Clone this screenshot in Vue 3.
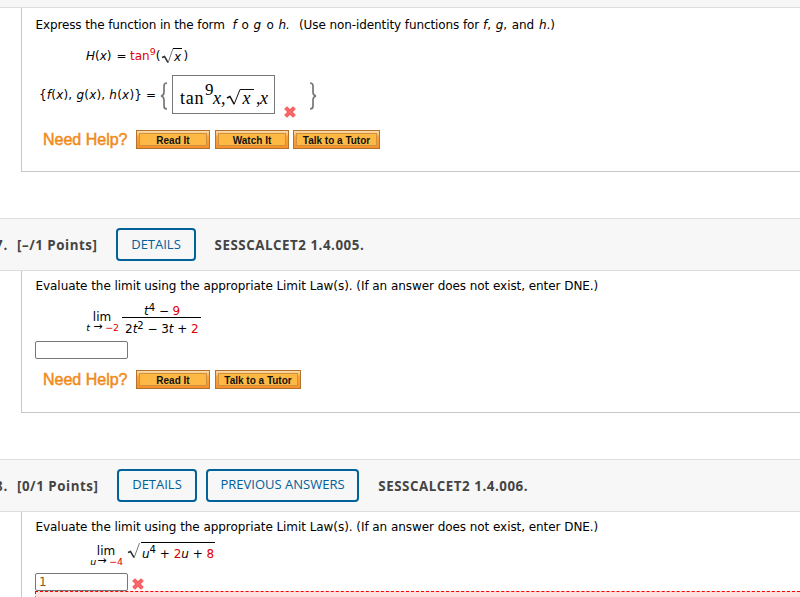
<script setup>
import { h } from 'vue'

const prompt = 'Evaluate the limit using the appropriate Limit Law(s). (If an answer does not exist, enter DNE.)'

const WrongMark = () =>
  h('svg', { class: 'wrong', viewBox: '0 0 14 14', width: 14, height: 14 }, [
    h('path', { d: 'M2.6 2.6L11.4 11.4M11.4 2.6L2.6 11.4', stroke: '#f7575a', 'stroke-width': 4 }),
    h('path', { d: 'M2.6 2.6L11.4 11.4M11.4 2.6L2.6 11.4', stroke: '#fb6b6b', 'stroke-width': 2 }),
  ])

const NeedHelp = ({ links }) =>
  h('div', { class: 'help' }, [
    h('span', { class: 'help-label' }, 'Need Help?'),
    ...links.map((l) => h('button', { class: ['help-btn', { wide: l.length > 10 }] }, h('span', l))),
  ])
NeedHelp.props = ['links']
</script>

<template>
  <main class="page">
    <div class="bar-end"></div>
    <section class="card first">
      <p class="line express">
        <span class="w-form">Express the function in the form</span>
        <i class="w-f">f</i><span class="w-o">o</span><i class="w-g">g</i><span class="w-o">o</span><i class="w-h">h.</i>
        <span class="w-use">(Use non-identity functions for</span>
        <span class="w-list"><i>f</i>, <i>g</i>, and <i>h</i>.)</span>
      </p>
      <div class="formula hx">
        <span class="w-hx"><i>H</i>(<i>x</i>)</span><span class="w-eq">=</span>
        <span class="red">tan</span><sup class="red">9</sup><span class="w-paren">(</span>
        <span class="root small-root">
          <svg viewBox="0 0 22 18" width="22" height="18">
            <path d="M1 10.5L3.5 9.5L7 15.5" fill="none" stroke="#333" stroke-width="1.5" />
            <path d="M7 16L12 1.5" fill="none" stroke="#777" stroke-width="1" />
            <path d="M12 1.5H21" fill="none" stroke="#000" stroke-width="1" />
          </svg>
          <i>x</i>
        </span><span>)</span>
      </div>
      <div class="formula answer">
        <span class="w-set">{<i>f</i>(<i>x</i>), <i>g</i>(<i>x</i>), <i>h</i>(<i>x</i>)}</span><span class="w-eq2">=</span>
        <svg class="brace" viewBox="0 0 8 28" width="8" height="28">
          <path d="M7 1Q4 1 4 4V10Q4 13.5 1 14Q4 14.5 4 18V24Q4 27 7 27" />
        </svg>
        <div class="mathbox">
          <span class="m-tan">tan</span><span class="m-sup">9</span><i class="m-x">x</i><span class="m-c">,</span>
          <span class="root big-root">
            <svg viewBox="0 0 28 20" width="28" height="20">
              <path d="M1 11L4 9.5L8 17" fill="none" stroke="#111" stroke-width="1.5" />
              <path d="M8 17.5L14 2.5H28" fill="none" stroke="#111" stroke-width="1" />
            </svg>
            <i>x</i>
          </span>
          <span class="m-c2">,</span><i class="m-x">x</i>
        </div>
        <WrongMark class="low" />
        <svg class="brace close" viewBox="0 0 8 28" width="8" height="28">
          <path d="M1 1Q4 1 4 4V10Q4 13.5 7 14Q4 14.5 4 18V24Q4 27 1 27" />
        </svg>
      </div>
      <NeedHelp :links="['Read It', 'Watch It', 'Talk to a Tutor']" />
    </section>

    <header class="qhead seven">
      <span class="num">7.</span><span class="points">[–/1 Points]</span>
      <button class="btn">DETAILS</button>
      <span class="code">SESSCALCET2 1.4.005.</span>
    </header>
    <section class="card second">
      <p class="line">{{ prompt }}</p>
      <div class="formula limit">
        <div class="lim">
          <span class="word">lim</span>
          <span class="under"><i>t</i><b class="arrow">→</b><em>−2</em></span>
        </div>
        <div class="frac">
          <div class="top"><i>t</i><sup>4</sup><span class="op">−</span><span class="red">9</span></div>
          <div class="bottom"><span>2<i>t</i></span><sup>2</sup><span class="op">−</span><span>3<i>t</i></span><span class="op">+</span><span class="red">2</span></div>
        </div>
      </div>
      <input class="field" />
      <NeedHelp :links="['Read It', 'Talk to a Tutor']" />
    </section>

    <header class="qhead eight">
      <span class="num">8.</span><span class="points">[0/1 Points]</span>
      <button class="btn">DETAILS</button>
      <button class="btn prev">PREVIOUS ANSWERS</button>
      <span class="code">SESSCALCET2 1.4.006.</span>
    </header>
    <section class="card third">
      <p class="line">{{ prompt }}</p>
      <div class="formula rootlimit">
        <div class="lim">
          <span class="word">lim</span>
          <span class="under"><i>u</i><b class="arrow">→</b><em>−4</em></span>
        </div>
        <svg class="radical" viewBox="0 0 14 18" width="14" height="18">
          <path d="M1 10.5L3.5 9.5L7 15.5" fill="none" stroke="#333" stroke-width="1.5" />
          <path d="M7 16L12.5 1" fill="none" stroke="#777" stroke-width="1" />
        </svg>
        <div class="radicand"><i>u</i><sup>4</sup><span class="op">+</span><span><span class="red">2</span><i>u</i></span><span class="op">+</span><span class="red">8</span></div>
      </div>
      <div class="given"><input class="field" value="1" /><WrongMark /></div>
      <div class="feedback"></div>
    </section>
  </main>
</template>

<style>
body { margin: 0; background: #fff; overflow: hidden; }
</style>

<style scoped>
.page { width: 800px; height: 597px; overflow: hidden; font: 12px/20px "DejaVu Sans", Verdana, sans-serif; color: #000; }
.page :deep(*) { box-sizing: border-box; }
.bar-end { height: 8px; background: #f7f7f7; border-bottom: 1px solid #ddd; box-sizing: border-box; }
.card { margin-left: 21px; border-left: 1px solid #c8c8c8; border-bottom: 1px solid #c8c8c8; padding-left: 13px; }
.first { height: 164px; margin-bottom: 46px; }
.second { height: 142px; margin-bottom: 46px; }
.third { height: 140px; border-bottom: 0; }
.line { margin: 0; padding: 5px 0 0 0.5px; height: 25px; letter-spacing: -0.06px; white-space: pre; }
.first .line { padding-top: 7px; height: 37px; display: flex; }
.w-form { width: 197px; letter-spacing: -0.125px; }
.w-f { width: 9px; } .w-o { width: 12px; } .w-g { width: 13px; } .w-h { width: 20.5px; }
.w-use { width: 184px; letter-spacing: -0.09px; }
.w-list { word-spacing: 1px; }
.formula { display: flex; }
.formula > * { flex: none; }
.red { color: #d00; }
sup { font-size: 10px; line-height: 12px; vertical-align: baseline; }
.hx { margin-left: 51px; height: 22px; line-height: 22px; }
.w-hx { width: 30.5px; } .w-eq { width: 13.5px; } .hx sup { margin-top: 1px; font-size: 9.5px; }
.w-paren { margin-right: 1px; }
.root { position: relative; display: block; }
.root svg { display: block; }
.small-root { width: 22px; margin-top: 2px; }
.small-root i { position: absolute; left: 12.5px; top: -1px; }
.answer { height: 55px; margin-left: 4px; padding-top: 17px; }
.w-set { width: 107px; line-height: 20px; letter-spacing: 0.2px; margin-top: 1px; }
.w-eq2 { width: 14px; margin-top: 1px; }
.brace { margin-top: -2px; fill: none; stroke: #777; stroke-width: 1.7; }
.brace path { fill: none; }
.mathbox { width: 103px; height: 39px; margin: -9px 0 0 4px; border: 1px solid #777; display: flex; padding: 12px 0 0 7px; font: 18px/20px "Liberation Serif", serif; }
.m-tan { width: 25px; letter-spacing: 0.8px; }
.m-sup { font-size: 17px; width: 8px; margin-top: -8px; }
.m-x { width: 8px; } .m-c { width: 5px; }
.big-root { width: 30px; margin-top: -1px; }
.big-root i { position: absolute; left: 16.5px; top: 1px; }
.m-c2 { width: 4px; }
:deep(.wrong) { display: block; fill: none; }
.low { margin: 21px 0 0 8px; }
.close { margin-left: 12px; }
:deep(.help) { display: flex; align-items: center; height: 21px; margin-left: 8px; }
:deep(.help-label) { width: 93px; font: 16px/20px "Liberation Sans", Arial, sans-serif; -webkit-text-stroke: 0.5px #f08a1a; color: #f08a1a; }
:deep(.help-btn) { width: 74px; height: 19px; margin: 0 5px 0 0; padding: 2px; border: 1px solid #b3712e; background: linear-gradient(#fbdcae, #f9a63c 35%, #f7902a); }
:deep(.help-btn.wide) { width: 87px; margin-left: -1px; }
.second :deep(.help-btn.wide) { width: 86px; margin-left: 0; }
:deep(.help-btn span) { display: block; height: 13px; border: 1px solid #d0913f; background: #fdb943; font: bold 10px/13px "Liberation Sans", Arial, sans-serif; color: #111; text-align: center; white-space: nowrap; }
.first :deep(.help) { margin-top: 7px; }
.qhead { box-sizing: border-box; height: 53px; background: #f7f7f7; border: solid #ddd; border-width: 1px 0; display: flex; align-items: center; font: bold 13.33px/20px "Open Sans", sans-serif; letter-spacing: 0.54px; color: #444; }
.num { width: 22px; margin-left: -5px; letter-spacing: 1px; }
.points { width: 99px; }
.eight .points { width: 100px; }
.btn { width: 80px; height: 33px; padding: 0; border: 2px solid #006298; border-radius: 4px; background: transparent; color: #00609a; font: 13px/27px "Open Sans", sans-serif; letter-spacing: 0; padding-bottom: 2px; }
.seven .btn { padding-bottom: 0; }
.prev { width: 153px; margin-left: 9px; }
.code { margin-left: 18.5px; }
.eight .code { margin-left: 19.3px; }
.limit { height: 45px; margin-left: 50px; }
.lim { width: 37px; display: flex; flex-direction: column; align-items: center; }
.word { height: 12px; line-height: 12px; margin-top: 15px; margin-left: -3px; }
.under { display: flex; font-size: 9.5px; line-height: 11px; margin-top: -1px; margin-left: -2px; }
.under i { width: 6px; }
.arrow { font: 11px/9px "DejaVu Sans", sans-serif; width: 13px; padding-left: 1px; }
.under em { font-style: normal; color: #d00; letter-spacing: -0.3px; }
.frac { width: 79px; margin-top: 5px; }
.frac > div { display: flex; height: 17px; line-height: 20px; }
.top { border-bottom: 1px solid #000; padding-left: 22px; }
.top .op { padding-right: 3.4px; }
.op { padding: 0 4px; }
.bottom { padding: 1px 0 0 3px; white-space: nowrap; }
.frac .bottom .op { padding: 0 3.7px; }
.frac sup { line-height: 13px; }
.field { display: block; width: 93px; height: 18px; margin: 0; padding: 0 3px; border: 1px solid #767676; border-radius: 2px; background: #fff; font: 12px/16px "DejaVu Sans", sans-serif; color: #8a5a14; }
.second :deep(.help) { margin-top: 10px; }
.rootlimit { height: 36px; margin-left: 54px; }
.rootlimit .word { margin-top: 8px; }
.radical { margin: 5px 0 0 1px; }
.radicand { display: flex; width: 74px; height: 22px; margin-top: 5px; padding-left: 1px; border-top: 1px solid #000; line-height: 22px; white-space: nowrap; }
.radicand sup { line-height: 14px; }
.radicand .op { padding: 0 3.8px; }
.given { display: flex; height: 18px; }
.given :deep(.wrong) { margin: 4px 0 0 3px; }
.feedback { height: 30px; border: 1px dashed #f00; border-right: 0; background: #fdd; }
</style>
